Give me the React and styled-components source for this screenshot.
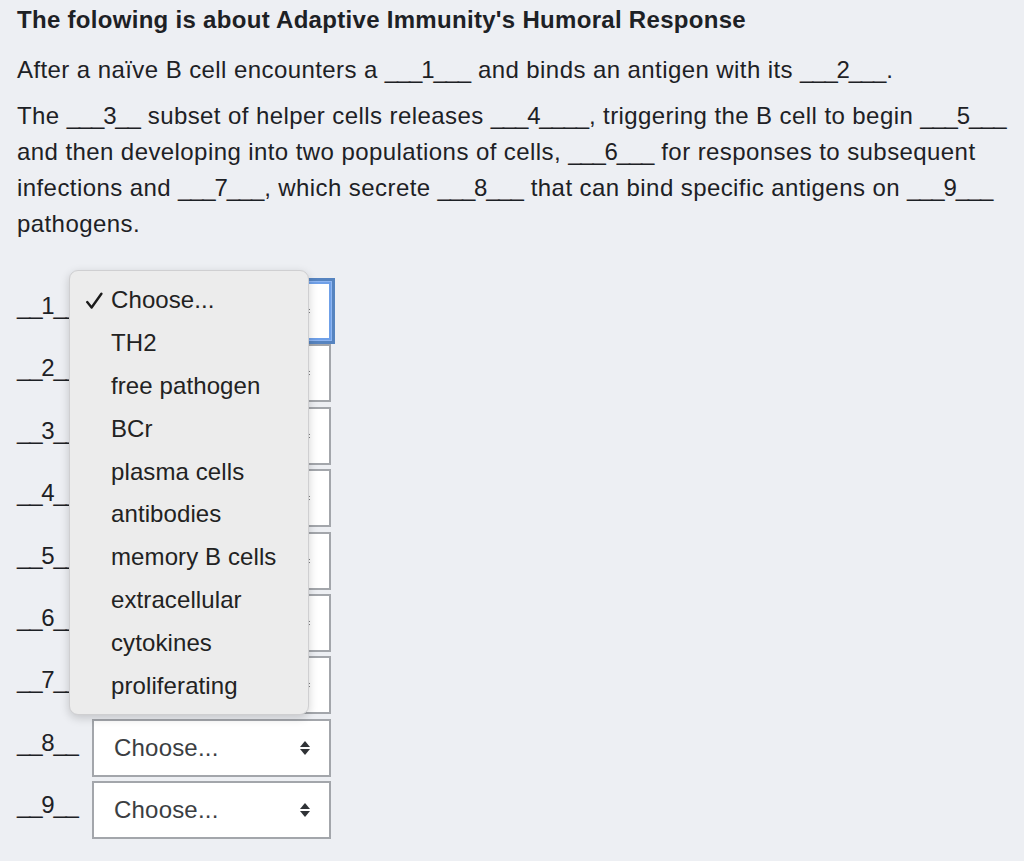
import React from "react";
import styled, { createGlobalStyle } from "styled-components";

const Global = createGlobalStyle`
  html, body { margin: 0; padding: 0; }
  body {
    background: #edeff3;
    font-family: "Liberation Sans", Arial, Helvetica, sans-serif;
    color: #1d2125;
  }
`;

const Page = styled.div`
  padding: 6px 0 20px 17px;
  width: 1024px;
  height: 861px;
  box-sizing: border-box;
  overflow: hidden;
`;

const Title = styled.h1`
  margin: 0;
  font-size: 24px;
  font-weight: bold;
  line-height: 28px;
  letter-spacing: 0.3px;
`;

const Para = styled.p`
  margin: ${(p) => p.$top}px 0 0 0;
  font-size: 24px;
  line-height: 36px;
  letter-spacing: 0.42px;
  white-space: nowrap;
`;

const Blank = styled.span`
  letter-spacing: -1.2px;
  margin-right: 1px;
`;

const Form = styled.div`
  position: relative;
  margin-top: 40px;
  display: flex;
  flex-direction: column;
  gap: 4.4px;
`;

const Row = styled.div`
  display: flex;
  align-items: center;
`;

const Label = styled.span`
  width: 75px;
  font-size: 24px;
  margin-top: -10px;
  white-space: nowrap;
`;

const Select = styled.div`
  width: 239px;
  height: 58px;
  box-sizing: border-box;
  background: #fff;
  border: 2px solid #a3a6ab;
  display: flex;
  align-items: center;
  justify-content: space-between;
  padding: 0 18px 0 20px;
  font-size: 24px;
  letter-spacing: 0.2px;
  color: #3b3e42;
  box-shadow: ${(p) =>
    p.$focus ? "0 0 0 1px #8fb6f2, 0 0 0 4px #5684c0" : "none"};
  border-color: ${(p) => (p.$focus ? "#6fa0e8" : "#a3a6ab")};
`;

const Menu = styled.div`
  position: absolute;
  left: 52px;
  top: -12px;
  width: 240px;
  height: 445px;
  box-sizing: border-box;
  background: #ececec;
  border: 1px solid #cfcfd1;
  border-radius: 9px;
  box-shadow: 0 3px 10px rgba(0, 0, 0, 0.18);
  padding: 8px 0 0 0;
  display: flex;
  flex-direction: column;
`;

const Item = styled.div`
  height: 42.8px;
  flex: none;
  display: flex;
  align-items: center;
  padding-left: 41px;
  position: relative;
  font-size: 24px;
  letter-spacing: 0.1px;
  color: #222;
`;

const CheckWrap = styled.span`
  position: absolute;
  left: 15px;
  top: 50%;
  transform: translateY(-45%);
  display: flex;
`;

const Check = () => (
  <CheckWrap>
    <svg width="18" height="18" viewBox="0 0 18 18">
      <path
        d="M2.2 10.2 L6.6 15.6 L16.4 1.8"
        fill="none"
        stroke="#1b1b1b"
        strokeWidth="2.4"
        strokeLinecap="round"
        strokeLinejoin="round"
      />
    </svg>
  </CheckWrap>
);

const Arrows = () => (
  <svg width="12" height="16" viewBox="0 0 12 16">
    <path d="M6 1 L11 7 L1 7 Z" fill="#2f3236" />
    <path d="M6 15 L11 9 L1 9 Z" fill="#2f3236" />
  </svg>
);

const options = [
  "TH2",
  "free pathogen",
  "BCr",
  "plasma cells",
  "antibodies",
  "memory B cells",
  "extracellular",
  "cytokines",
  "proliferating",
];

const B = ({ pre = "___", n, post = "___" }) => (
  <Blank>
    {pre}
    {n}
    {post}
  </Blank>
);

export default function App() {
  const rows = [1, 2, 3, 4, 5, 6, 7, 8, 9];
  return (
    <Page>
      <Global />
      <Title>The folowing is about Adaptive Immunity's Humoral Response</Title>
      <Para $top={18}>
        After a naïve B cell encounters a <B n="1" /> and binds an antigen with its <B n="2" />.
      </Para>
      <Para $top={10}>
        The <B n="3" post="__" /> subset of helper cells releases <B n="4" post="____" />, triggering
        the B cell to begin <B n="5" />
        <br />
        and then developing into two populations of cells, <B n="6" /> for responses to subsequent
        <br />
        infections and <B n="7" />, which secrete <B n="8" /> that can bind specific antigens on{" "}
        <B n="9" />
        <br />
        pathogens.
      </Para>
      <Form>
        {rows.map((n) => (
          <Row key={n}>
            <Label>
              <B pre="__" n={n} post="__" />
            </Label>
            <Select $focus={n === 1}>
              <span>Choose...</span>
              <Arrows />
            </Select>
          </Row>
        ))}
        <Menu>
          <Item>
            <Check />
            Choose...
          </Item>
          {options.map((o) => (
            <Item key={o}>{o}</Item>
          ))}
        </Menu>
      </Form>
    </Page>
  );
}
